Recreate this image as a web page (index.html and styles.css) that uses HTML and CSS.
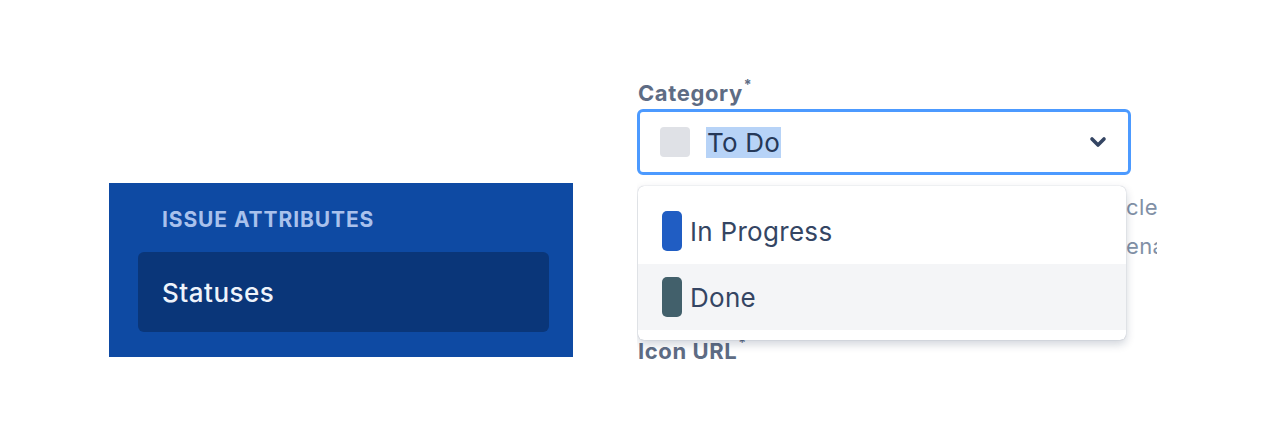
FILE: index.html
```html
<!DOCTYPE html>
<html>
<head>
    <meta charset="utf-8">
    <link rel="stylesheet" href="styles.css">
</head>
<body>
<div class="page">
    <div class="sidebar">
        <div class="sidebar-heading">ISSUE ATTRIBUTES</div>
        <div class="sidebar-item">Statuses</div>
    </div>

    <div class="form">
        <label class="field-label">Category<span class="req">*</span></label>
        <div class="select">
            <span class="swatch"></span>
            <span class="select-value">To Do</span>
            <svg class="chevron" width="18" height="12" viewBox="0 0 18 12">
                <path d="M3 3 L9 9 L15 3" fill="none" stroke="#344563" stroke-width="3.6" stroke-linecap="round" stroke-linejoin="round"/>
            </svg>
        </div>
        <p class="helper">clearly</p>
        <p class="helper">enabled</p>
        <label class="field-label">Icon URL<span class="req">*</span></label>

        <div class="menu">
            <div class="menu-item">
                <span class="bar bar-blue"></span>
                <span>In Progress</span>
            </div>
            <div class="menu-item active">
                <span class="bar bar-teal"></span>
                <span>Done</span>
            </div>
        </div>
    </div>
</div>
</body>
</html>
```

FILE: styles.css
```css
body {
    margin: 0; /* Remove default margin */
    background: #ffffff;
    font-family: Inter, "Noto Sans", sans-serif;
}

.page {
    display: flex;
    align-items: flex-start;
    padding-left: 109px;
}

/* left navigation */
.sidebar {
    width: 464px;
    height: 174px;
    margin-top: 183px;
    background-color: #0e4aa3;
    padding-top: 23px;
    box-sizing: border-box;
}

.sidebar-heading {
    padding-left: 53px;
    font-size: 21px;
    font-weight: 700;
    line-height: 28px;
    letter-spacing: 0.9px;
    color: #a9c1ec;
}

.sidebar-item {
    margin: 18px 0 0 29px;
    width: 411px;
    height: 80px;
    padding-left: 24px;
    box-sizing: border-box;
    display: flex;
    align-items: center;
    background-color: #0a3679;
    border-radius: 6px;
    color: #eef3fb;
    font-size: 26px;
    font-weight: 500;
    letter-spacing: 0.5px;
}

/* category form */
.form {
    position: relative;
    margin-left: 64px;
    width: 520px;
    height: 362px;
    padding-top: 80px;
    box-sizing: border-box;
    overflow: hidden;
}

.field-label {
    display: block;
    font-size: 22px;
    font-weight: 700;
    line-height: 26px;
    letter-spacing: 0.6px;
    color: #5e6c84;
    padding-left: 1px;
}

.req {
    font-size: 14px;
    line-height: 0;
    vertical-align: 11px;
    margin-left: 1px;
}

.select {
    margin-top: 3px;
    width: 494px;
    height: 66px;
    border: 3px solid #4c9aff;
    border-radius: 6px;
    box-sizing: border-box;
    display: flex;
    align-items: center;
    padding: 0 20px;
}

.swatch {
    width: 30px;
    height: 30px;
    border-radius: 4px;
    background-color: #dfe1e6;
}

.select-value {
    margin-left: 16px;
    font-size: 26px;
    line-height: 31px;
    letter-spacing: 0.2px;
    color: #253858;
    background-color: #b7d3f7;
    padding: 0 1px;
}

.chevron {
    margin-left: auto;
    margin-right: 1px;
}

.helper {
    margin: 13px 0 0 0;
    padding-left: 489px;
    white-space: nowrap;
    font-size: 22px;
    line-height: 39px;
    letter-spacing: 0.4px;
    color: #8190a6;
}

.helper + .helper {
    margin-top: 0;
}

.helper + .field-label {
    margin-top: 72px;
}

/* dropdown over the form */
.menu {
    position: absolute;
    top: 186px;
    left: 1px;
    width: 488px;
    padding: 12px 0 10px;
    background: #ffffff;
    border-radius: 6px;
    box-shadow: 0 4px 10px rgba(9, 30, 66, 0.2), 0 0 1px rgba(9, 30, 66, 0.35);
}

.menu-item {
    height: 66px;
    display: flex;
    align-items: center;
    padding-left: 24px;
    gap: 8px;
    font-size: 26px;
    letter-spacing: 0.3px;
    color: #344563;
}

.menu-item.active {
    background-color: #f4f5f7;
}

.bar {
    width: 20px;
    height: 40px;
    border-radius: 5px;
}

.bar-blue {
    background-color: #205dc3;
}

.bar-teal {
    background-color: #42606b;
}
```
